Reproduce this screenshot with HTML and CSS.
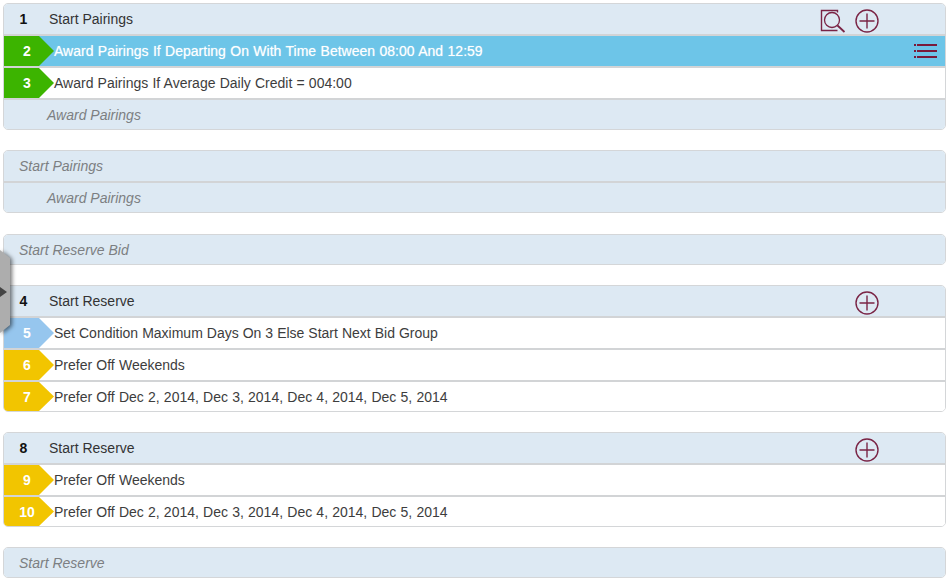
FILE: index.html
```html
<!DOCTYPE html>
<html lang="en">
<head>
<meta charset="utf-8">
<title>Bid Groups</title>
<link rel="stylesheet" href="styles.css">
</head>
<body>
<main class="page">
  <section class="group">
    <div class="row head"><span class="num">1</span><span class="label">Start Pairings</span>
      <span class="icons">
        <svg class="ic" width="26" height="24" viewBox="0 0 26 24"><path d="M17.5 3.5V1.5H1.5V21.5H17.5" fill="none" stroke="#7a2445" stroke-width="1.4"/><circle cx="12" cy="11" r="7.5" fill="none" stroke="#7a2445" stroke-width="1.3"/><path d="M17.5 16.5l7 6.5" stroke="#7a2445" stroke-width="1.8"/></svg>
        <svg class="ic" width="24" height="24" viewBox="0 0 24 24"><circle cx="12" cy="12" r="11" fill="none" stroke="#7a2445" stroke-width="1.4"/><path d="M12 4.5v15M4.5 12h15" stroke="#7a2445" stroke-width="1.4"/></svg>
      </span></div>
    <div class="row rule selected"><span class="tag green">2</span><span class="text">Award Pairings If Departing On With Time Between 08:00 And 12:59</span>
      <svg class="menu" width="24" height="14" viewBox="0 0 24 14"><path d="M1 1h2M4 1h20M1 7h2M4 7h20M1 13h2M4 13h20" stroke="#7a1a3a" stroke-width="2"/></svg></div>
    <div class="row rule"><span class="tag green">3</span><span class="text">Award Pairings If Average Daily Credit = 004:00</span></div>
    <div class="row head sub"><span class="hint">Award Pairings</span></div>
  </section>

  <section class="group spaced">
    <div class="row head"><span class="hint">Start Pairings</span></div>
    <div class="row head sub"><span class="hint">Award Pairings</span></div>
  </section>

  <section class="group">
    <div class="row head"><span class="hint">Start Reserve Bid</span></div>
  </section>

  <section class="group">
    <div class="row head"><span class="num">4</span><span class="label">Start Reserve</span>
      <span class="icons"><svg class="ic" width="24" height="24" viewBox="0 0 24 24"><circle cx="12" cy="12" r="11" fill="none" stroke="#7a2445" stroke-width="1.4"/><path d="M12 4.5v15M4.5 12h15" stroke="#7a2445" stroke-width="1.4"/></svg></span></div>
    <div class="row rule"><span class="tag blue">5</span><span class="text tight">Set Condition Maximum Days On 3 Else Start Next Bid Group</span></div>
    <div class="row rule"><span class="tag yellow">6</span><span class="text">Prefer Off Weekends</span></div>
    <div class="row rule"><span class="tag yellow">7</span><span class="text">Prefer Off Dec 2, 2014, Dec 3, 2014, Dec 4, 2014, Dec 5, 2014</span></div>
  </section>

  <section class="group">
    <div class="row head"><span class="num">8</span><span class="label">Start Reserve</span>
      <span class="icons"><svg class="ic" width="24" height="24" viewBox="0 0 24 24"><circle cx="12" cy="12" r="11" fill="none" stroke="#7a2445" stroke-width="1.4"/><path d="M12 4.5v15M4.5 12h15" stroke="#7a2445" stroke-width="1.4"/></svg></span></div>
    <div class="row rule"><span class="tag yellow">9</span><span class="text">Prefer Off Weekends</span></div>
    <div class="row rule"><span class="tag yellow">10</span><span class="text">Prefer Off Dec 2, 2014, Dec 3, 2014, Dec 4, 2014, Dec 5, 2014</span></div>
  </section>

  <section class="group">
    <div class="row head"><span class="hint">Start Reserve</span></div>
  </section>
</main>
<div class="handle"><div class="handle-body"><span class="arrow"></span></div></div>
</body>
</html>
```
FILE: styles.css
```css
* { box-sizing: border-box; }
html, body { margin: 0; height: 100%; overflow: hidden; background: #fff; }
body { font-family: "Liberation Sans", Arial, sans-serif; font-size: 14px; color: #333; }
.page { padding: 3px 4px 0 3px; display: flex; flex-direction: column; gap: 20px; }
.group { border-radius: 5px; border: 1px solid #d4d6d8; overflow: hidden; }
.spaced { margin-bottom: 1px; }
.row { height: 32px; display: flex; align-items: center; border-bottom: 2px solid #d2d4d6; background: #fff; }
.row:last-child { border-bottom: 0; height: 29px; }
.head { background: #dde9f3; }
.num { width: 39px; text-align: center; font-weight: 700; color: #111; }
.label { margin-left: 6px; color: #333; }
.hint { font-style: italic; color: #7c7f82; margin-left: 15px; }
.sub .hint { margin-left: 43px; }
.icons { margin-left: auto; margin-right: 66px; margin-top: 3px; display: flex; align-items: center; gap: 9px; }
.ic { display: block; }
.tag { width: 50px; align-self: stretch; flex: none; display: flex; align-items: center; justify-content: center; padding-right: 4px; color: #fff; font-weight: 700; clip-path: polygon(0 0, 35px 0, 50px 50%, 35px 100%, 0 100%); }
.green { background: #3cb400; }
.blue { background: #96c6ee; }
.yellow { background: #f2c500; }
.text { color: #3d3d3d; word-spacing: .3px; }
.text.tight { word-spacing: .1px; }
.selected { background: #6dc5e8; }
.selected .text { color: #fff; word-spacing: .55px; text-shadow: 0 0 1px rgba(255,255,255,.6); }
.menu { margin-left: auto; margin-right: 8px; }
.handle { position: absolute; left: 0; top: 250px; width: 14px; height: 83px; filter: drop-shadow(2px 1px 2px rgba(0,0,0,.55)); }
.handle-body { position: relative; width: 10px; height: 83px; background: #adadad; clip-path: polygon(0 0, 100% 8px, 100% 75px, 0 100%); }
.arrow { position: absolute; left: 0; top: 37px; border-left: 7px solid #444; border-top: 5px solid transparent; border-bottom: 5px solid transparent; }
```
